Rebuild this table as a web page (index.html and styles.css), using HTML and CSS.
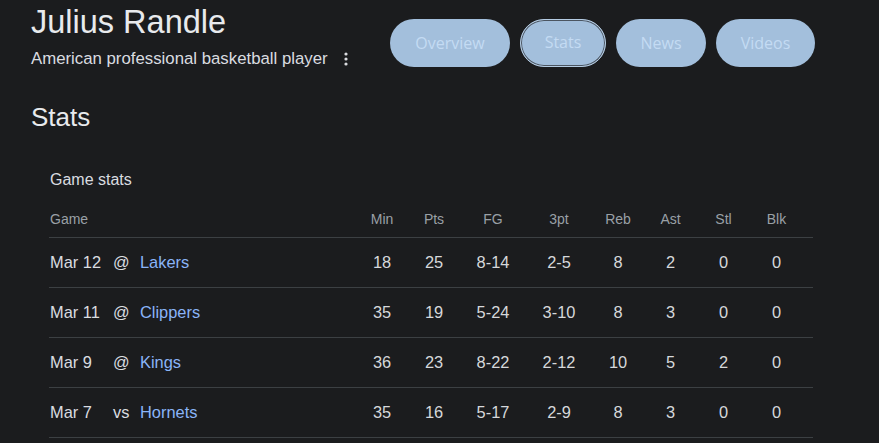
FILE: index.html
```html
<!DOCTYPE html>
<html>
<head>
<meta charset="utf-8">
<link rel="stylesheet" href="styles.css">
</head>
<body>
<div class="page">
  <header class="top">
    <div class="ident">
      <h1 class="name">Julius Randle</h1>
      <div class="sub">
        <span>American professional basketball player</span>
        <svg class="kebab" width="4" height="14" viewBox="0 0 4 14"><circle cx="2" cy="2" r="1.6" fill="#dadce0"/><circle cx="2" cy="7" r="1.6" fill="#dadce0"/><circle cx="2" cy="12" r="1.6" fill="#dadce0"/></svg>
      </div>
    </div>
    <nav class="tabs">
      <span class="tab">Overview</span>
      <span class="tab active">Stats</span>
      <span class="tab">News</span>
      <span class="tab">Videos</span>
    </nav>
  </header>
  <h2 class="section">Stats</h2>
  <section class="card">
    <div class="card-title">Game stats</div>
    <div class="row head">
      <div class="game">Game</div>
      <div>Min</div><div>Pts</div><div>FG</div><div>3pt</div><div>Reb</div><div>Ast</div><div>Stl</div><div>Blk</div>
    </div>
    <div class="row">
      <div class="game"><span class="date">Mar 12</span><span class="loc">@</span><span class="team">Lakers</span></div>
      <div>18</div><div>25</div><div>8-14</div><div>2-5</div><div>8</div><div>2</div><div>0</div><div>0</div>
    </div>
    <div class="row">
      <div class="game"><span class="date">Mar 11</span><span class="loc">@</span><span class="team">Clippers</span></div>
      <div>35</div><div>19</div><div>5-24</div><div>3-10</div><div>8</div><div>3</div><div>0</div><div>0</div>
    </div>
    <div class="row">
      <div class="game"><span class="date">Mar 9</span><span class="loc">@</span><span class="team">Kings</span></div>
      <div>36</div><div>23</div><div>8-22</div><div>2-12</div><div>10</div><div>5</div><div>2</div><div>0</div>
    </div>
    <div class="row">
      <div class="game"><span class="date">Mar 7</span><span class="loc">vs</span><span class="team">Hornets</span></div>
      <div>35</div><div>16</div><div>5-17</div><div>2-9</div><div>8</div><div>3</div><div>0</div><div>0</div>
    </div>
  </section>
</div>
</body>
</html>
```
FILE: styles.css
```css
html, body {
  margin: 0;
  padding: 0;
  background: #1b1c1e;
  height: 100%;
  overflow: hidden;
}
body {
  font-family: "Liberation Sans", Arial, sans-serif;
  color: #dadce0;
}
.page {
  padding: 0 0 0 31px;
  width: 782px;
}
.top {
  display: flex;
  align-items: flex-start;
}
.ident {
  width: 359px;
  flex-shrink: 0;
}
.name {
  margin: 0;
  padding-top: 3px;
  font-size: 32.5px;
  line-height: 38px;
  font-weight: 400;
  color: #e8eaed;
}
.sub {
  display: flex;
  align-items: center;
  gap: 16px;
  font-size: 16.8px;
  line-height: 22px;
  margin-top: 7px;
  color: #dadce0;
}
.kebab { display: block; }
.tabs {
  display: flex;
  flex-shrink: 0;
  gap: 10px;
  margin-top: 19px;
}
.tab {
  height: 48px;
  box-sizing: border-box;
  border-radius: 24px;
  background: #a3bfdc;
  color: #c4dbf3;
  font-family: "Open Sans", Roboto, sans-serif;
  font-size: 16px;
  display: flex;
  align-items: center;
  justify-content: center;
  padding: 0 0 1px;
}
.tab:nth-child(1) { width: 120px; }
.tab:nth-child(2) { width: 86px; padding-bottom: 3px; border: 1px solid #b5cce3; box-shadow: 0 0 0 1px #4b5561 inset; }
.tab:nth-child(3) { width: 90px; }
.tab:nth-child(4) { width: 99px; }
.section {
  margin: 31px 0 0;
  font-size: 26px;
  line-height: 32px;
  font-weight: 400;
  color: #e8eaed;
}
.card {
  padding: 0 0 0 18px;
  margin-top: 37px;
}
.card-title {
  font-size: 16px;
  line-height: 20px;
  color: #dadce0;
  margin-left: 1px;
}
.row {
  display: grid;
  grid-template-columns: 1fr 52px 52px 66px 66px 52px 53px 53px 53px;
  padding-right: 10px;
  align-items: center;
  height: 49px;
  border-bottom: 1px solid #3c4043;
  font-size: 16.4px;
  color: #d6d8db;
  text-align: center;
}
.row.head {
  height: 29px;
  box-sizing: border-box;
  margin-top: 19px;
  padding-top: 2px;
  font-size: 14px;
  line-height: 16px;
  color: #9aa0a6;
  align-items: start;
}
.game {
  text-align: left;
  padding-left: 1px;
  display: flex;
}
.date { width: 63px; color: #dadce0; }
.loc { width: 27px; color: #dadce0; }
.team { color: #8ab4f8; }
```
